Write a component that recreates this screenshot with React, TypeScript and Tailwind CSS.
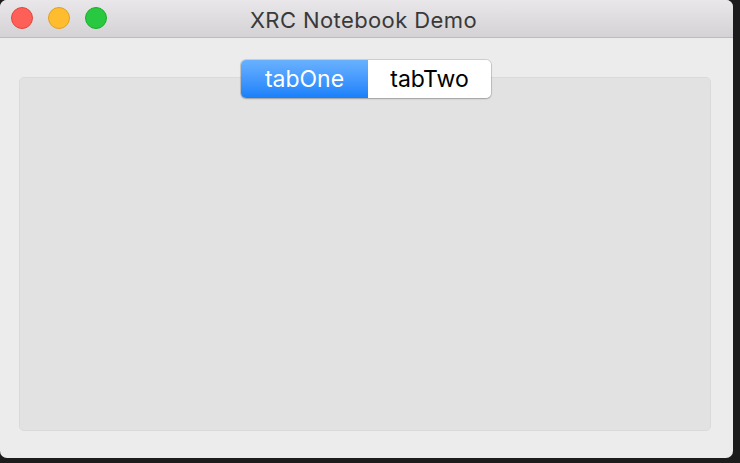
import React from "react";

const TrafficLight = ({ fill, ring }: { fill: string; ring: string }) => (
  <span className={`block w-[22px] h-[22px] rounded-full border ${fill} ${ring}`} />
);

const App = () => {
  return (
    <div className="w-[740px] h-[463px] bg-[#1c1c1c] overflow-hidden">
      <div
        className="w-[733px] h-[458px] bg-[#ececec] rounded-[7px] overflow-hidden flex flex-col"
        style={{ fontFamily: "Inter, 'Liberation Sans', sans-serif" }}
      >
        {/* title bar */}
        <div className="relative h-[38px] shrink-0 bg-gradient-to-b from-[#e9e7e9] to-[#d4d2d4] border-b border-[#bdbbbd] flex items-center justify-center">
          <div className="absolute left-[11px] top-[7px] flex gap-[15px]">
            <TrafficLight fill="bg-[#fe5f57]" ring="border-[#e2463f]" />
            <TrafficLight fill="bg-[#febc2e]" ring="border-[#dfa123]" />
            <TrafficLight fill="bg-[#28c840]" ring="border-[#1dad2b]" />
          </div>
          <span className="text-[22px] text-[#393939] tracking-[0.4px] leading-none ml-[-6px] mt-[2px]">
            XRC Notebook Demo
          </span>
        </div>

        {/* content */}
        <div className="flex flex-col pt-[22px] pl-[19px] pr-[22px]">
          <div className="relative z-10 flex justify-center">
            <div className="flex h-[38px] rounded-[5px] shadow-[0_0_0_1px_rgba(0,0,0,0.12),0_1px_2px_rgba(0,0,0,0.2)] overflow-hidden ml-[2px]">
              <div className="w-[127px] flex items-center justify-center bg-gradient-to-b from-[#69b1ff] to-[#1680fa] text-white text-[23px]">
                tabOne
              </div>
              <div className="w-[123px] flex items-center justify-center bg-white text-black text-[23px]">
                tabTwo
              </div>
            </div>
          </div>
          <div className="-mt-[21px] h-[354px] bg-[#e2e2e2] border border-[#dadada] rounded-[5px]" />
        </div>
      </div>
    </div>
  );
};

export default App;
